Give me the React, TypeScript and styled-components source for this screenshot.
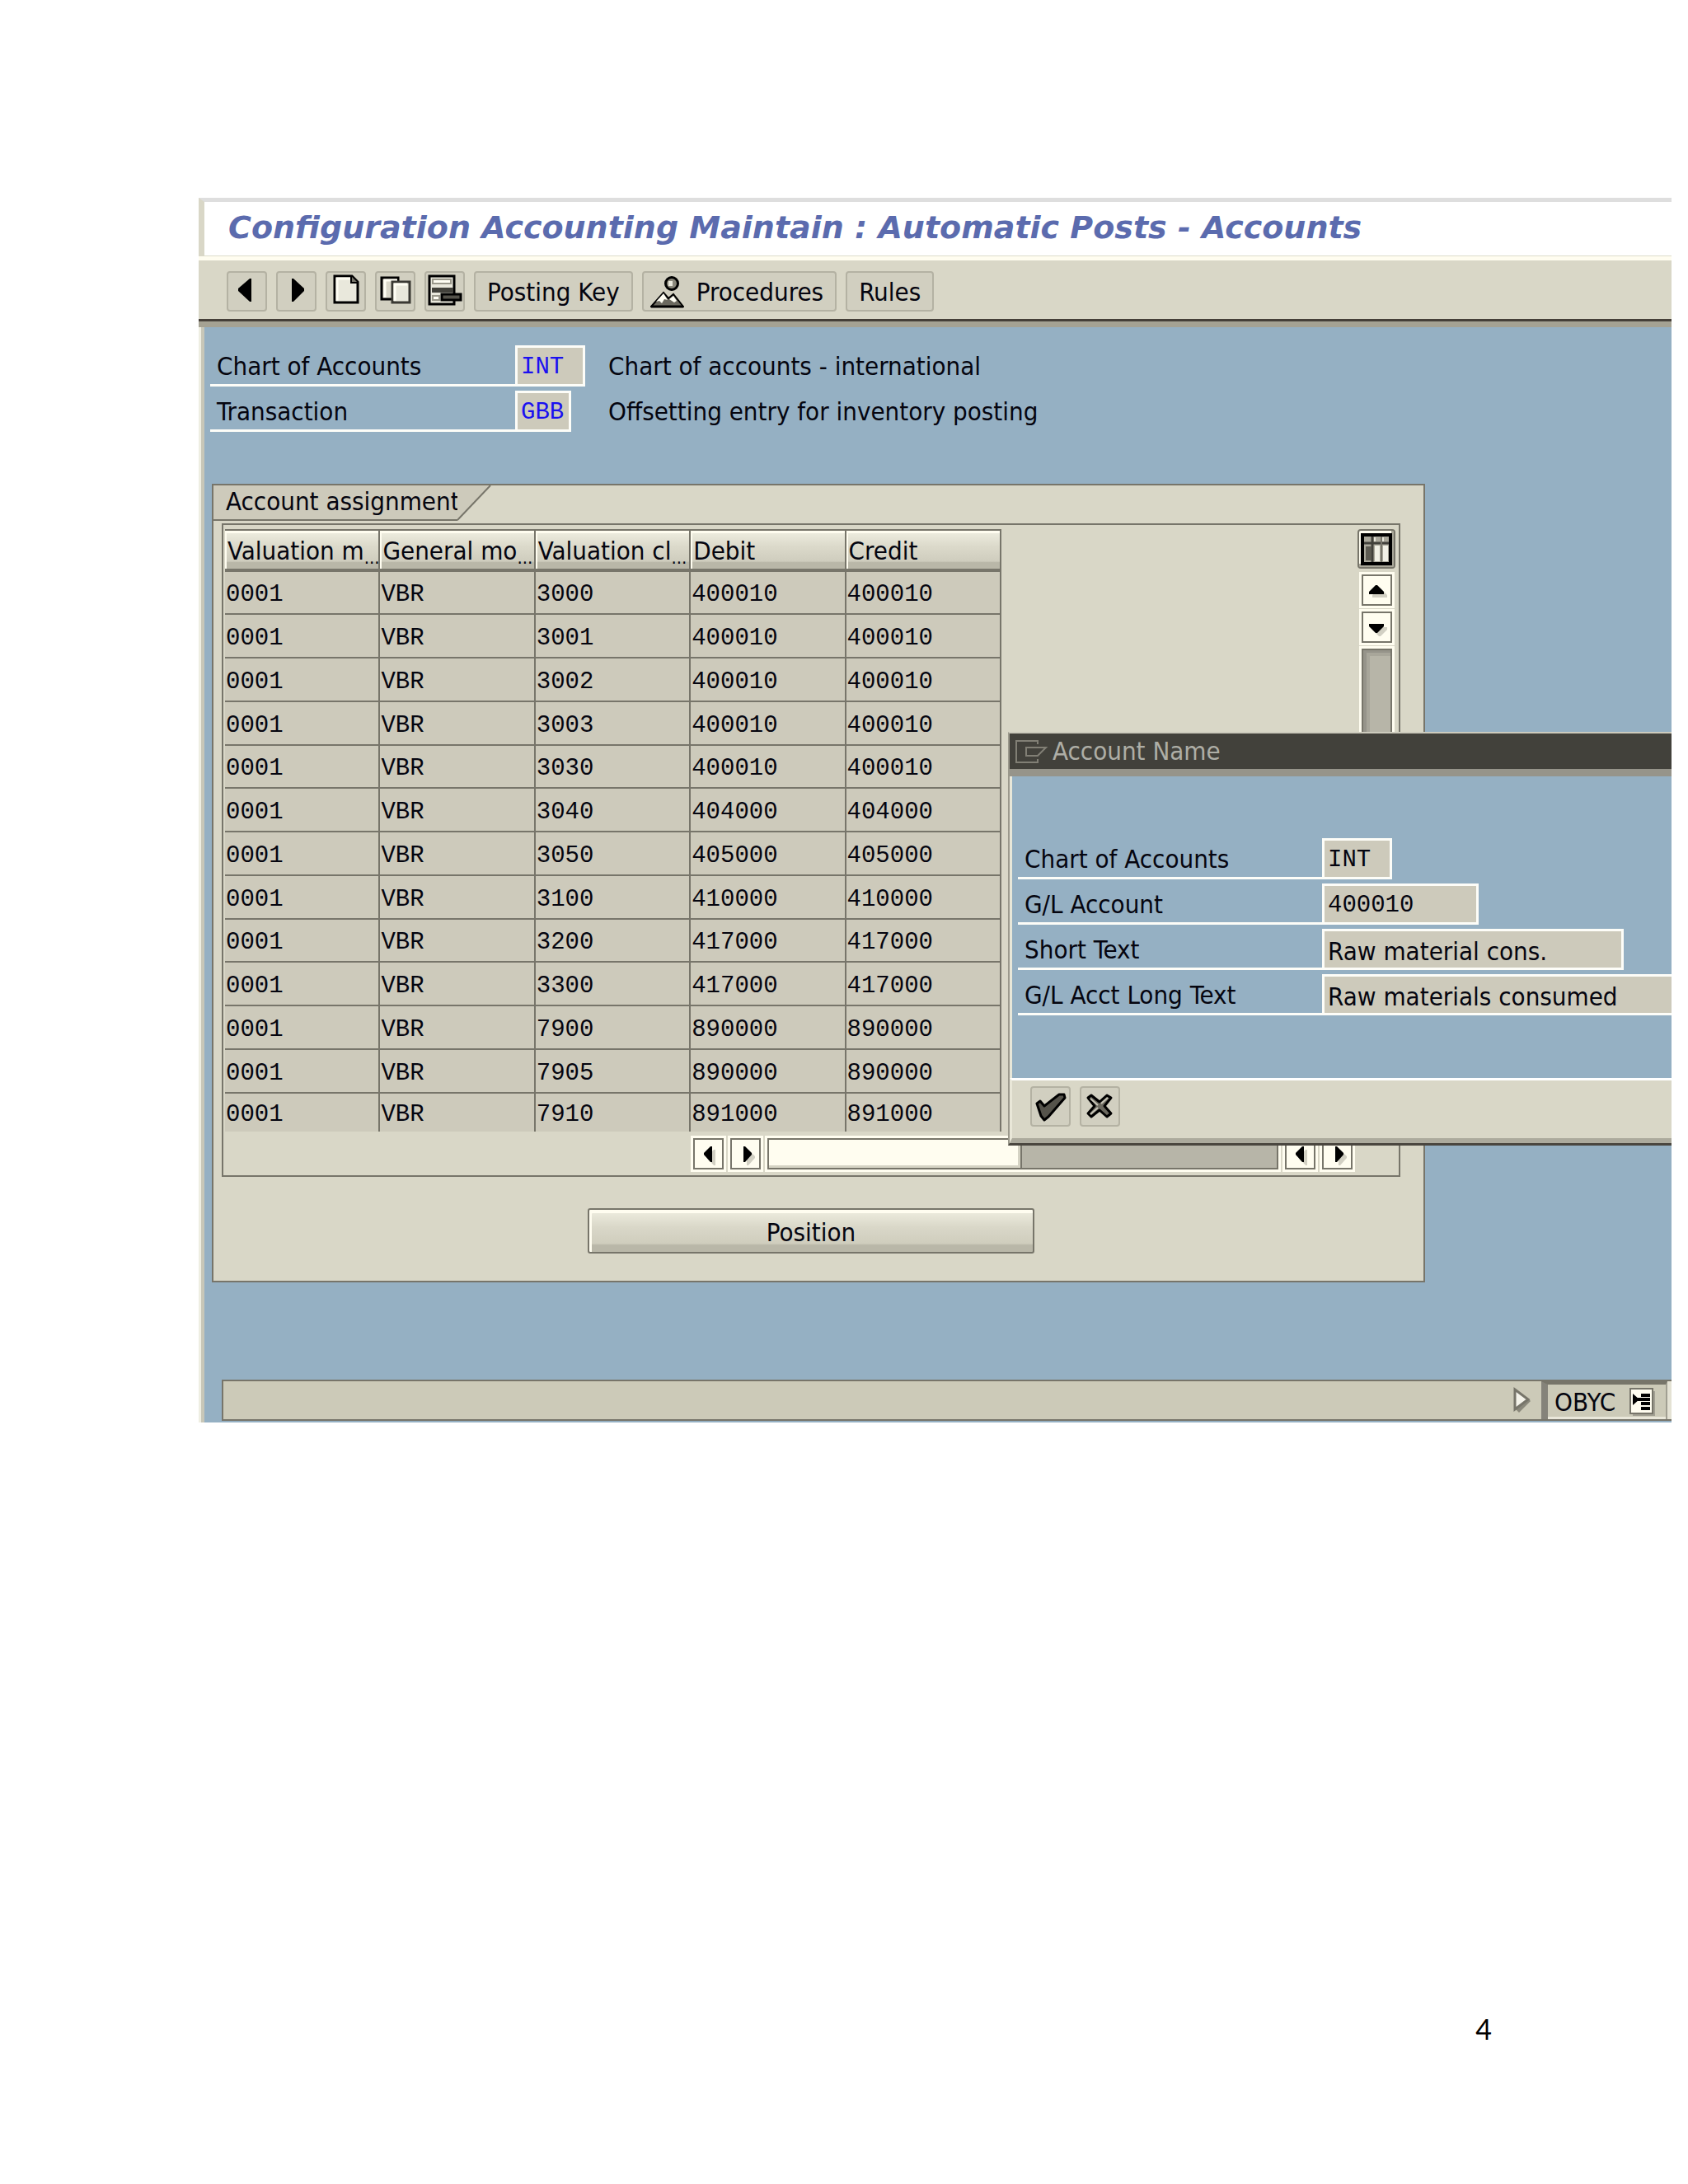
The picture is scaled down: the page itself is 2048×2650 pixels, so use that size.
import React from "react";
import styled, { createGlobalStyle, css } from "styled-components";

const color = {
  blue: "#95b0c3",
  panel: "#d9d7c7",
  cell: "#cdcabb",
  button: "#d1cfc0",
  line: "#77756a",
  soft: "#b4b2a3",
  cream: "#fffdf0",
  white: "#fdfdf8",
  ink: "#05050f",
  title: "#5b6bae",
  dark: "#42413b",
};

const sans = `"DejaVu Sans Condensed", "Noto Sans", sans-serif`;
const mono = `"Liberation Mono", monospace`;

const GlobalStyle = createGlobalStyle`
  * { box-sizing: border-box; }
  body { margin: 0; background: #fff; color: ${color.ink}; }
  body, button, input { font-family: ${sans}; font-size: 31px; }
  svg { display: block; flex: none; }
`;

const Page = styled.div`
  min-height: 100vh;
  padding: 240px 20px 0 241px;
`;

const Window = styled.main`
  position: relative;
  overflow: hidden;
`;

const TitleBar = styled.header`
  height: 71px;
  display: flex;
  align-items: center;
  padding-left: 29px;
  border-top: 5px solid #dedede;
  border-left: 7px solid ${color.panel};
  box-shadow: inset 0 -1px #dddccb;
`;

const Title = styled.h1`
  margin: 0;
  font: italic bold 38px/48px "DejaVu Sans", sans-serif;
  color: ${color.title};
  white-space: nowrap;
  padding-bottom: 4px;
`;

const Toolbar = styled.nav`
  display: flex;
  gap: 11px;
  height: 86px;
  padding: 13px 0 0 34px;
  background: ${color.panel};
  border-top: 5px solid ${color.cream};
  border-bottom: 7px solid #a5a293;
  box-shadow: inset 0 -3px #453f38;
`;

const ToolButton = styled.button<{ $wide?: boolean }>`
  display: flex;
  align-items: center;
  gap: 15px;
  height: 49px;
  width: ${(p) => (p.$wide ? "auto" : "49px")};
  padding: ${(p) => (p.$wide ? "0 14px" : "0")};
  border: 2px solid ${color.soft};
  border-radius: 4px;
  background: ${color.button};
  color: ${color.ink};
  white-space: nowrap;
`;

const IconLabel = styled(ToolButton)`
  padding: 0 14px 0 8px;
`;

const Workspace = styled.div`
  padding: 22px 0 2px 7px;
  background: ${color.blue};
  border-left: 3px solid #eeeee2;
  box-shadow: inset 4px 0 #c8c7b8;
`;

const Form = styled.form<{ $left: number }>`
  display: grid;
  gap: 5px;
  padding-left: ${(p) => p.$left}px;
`;

const FormRow = styled.div`
  display: flex;
  height: 50px;
`;

const FieldLabel = styled.label<{ $width: number }>`
  flex: none;
  width: ${(p) => p.$width}px;
  padding: 4px 0 0 8px;
  line-height: 43px;
  white-space: nowrap;
  border-bottom: 3px solid ${color.white};
`;

const Field = styled.input<{ $width?: number; $mono?: boolean; $open?: boolean; $blue?: boolean }>`
  height: 50px;
  min-width: 0;
  ${(p) => (p.$width ? css`width: ${p.$width}px;` : css`flex: 1;`)}
  padding: 3px 0 0 4px;
  border: 3px solid ${color.white};
  ${(p) => p.$open && css`border-right: 0;`}
  border-radius: 0;
  outline: 0;
  background: ${color.cell};
  color: ${(p) => (p.$blue ? "#1a10f0" : color.ink)};
  ${(p) => p.$mono && css`font-family: ${mono}; font-size: 29px;`}
`;

const Description = styled.output<{ $gap: number }>`
  padding: 3px 0 0 ${(p) => p.$gap}px;
  line-height: 45px;
  white-space: nowrap;
`;

const Panel = styled.section`
  margin: 63px 299px 0 6px;
  border: 2px solid ${color.line};
  background: ${color.panel};
`;

const Tab = styled.div`
  display: flex;
  height: 43px;
  margin-bottom: 3px;
`;

const TabLabel = styled.h2`
  margin: 0;
  width: 296px;
  padding-left: 15px;
  font: 31px/39px ${sans};
  white-space: nowrap;
  background: ${color.cell};
  border-bottom: 2px solid ${color.line};
`;

const PanelBody = styled.div`
  display: flex;
  flex-direction: column;
  align-items: center;
  gap: 38px;
  padding: 0 28px 33px 10px;
`;

const GridBox = styled.div`
  align-self: stretch;
  border: 2px solid ${color.line};
  padding: 5px 4px 4px 2px;
`;

const GridTop = styled.div`
  display: flex;
  justify-content: space-between;
`;

const Table = styled.table`
  table-layout: fixed;
  width: 942px;
  border-spacing: 0;
  border-collapse: separate;
`;

const HeadCell = styled.th`
  height: 52px;
  padding: 2px 0 0 3px;
  text-align: left;
  font-weight: normal;
  line-height: 40px;
  white-space: nowrap;
  overflow: hidden;
  border: solid ${color.line};
  border-width: 2px 2px 4px 0;
  background: linear-gradient(#efeee1, #dcdacb 40%, #cfcdbe 80%, #b9b7a8 84%);
  box-shadow: inset 2px 3px ${color.cream};
`;

const Dots = styled.span`
  font-size: 22px;
  line-height: 20px;
  vertical-align: -5px;
`;

const Row = styled.tr`
  height: 53px;
  &:nth-child(4n + 1) { height: 52px; }
  &:last-child { height: 46px; }
  &:last-child td { border-bottom: 0; }
`;

const Cell = styled.td`
  padding: 6px 0 0 1px;
  font: 29px/36px ${mono};
  background: ${color.cell};
  border: solid ${color.line};
  border-width: 0 2px 2px 0;
`;

const SideBar = styled.div`
  display: flex;
  flex-direction: column;
  align-items: center;
  gap: 7px;
  width: 46px;
`;

const ColumnsButton = styled.button`
  display: grid;
  place-items: center;
  width: 46px;
  height: 48px;
  padding: 0;
  border: 2px solid ${color.line};
  border-radius: 4px;
  background: ${color.cream};
  box-shadow: inset -3px -4px #a9a799;
`;

const ScrollButton = styled.button`
  display: grid;
  place-items: center;
  flex: none;
  width: 37px;
  height: 38px;
  padding: 0;
  border: 2px solid ${color.line};
  background: ${color.cream};
  box-shadow: 0 0 0 3px ${color.cream};
`;

const VerticalTrack = styled.div`
  flex: 1;
  width: 37px;
  border: 2px solid ${color.line};
  background: #b7b5a8;
  box-shadow: 0 0 0 3px ${color.cream}, inset 4px 3px #96948a, inset 8px 7px #a8a69a;
`;

const BottomScroll = styled.div`
  display: flex;
  gap: 8px;
  margin: 8px 52px 3px 568px;
`;

const HorizontalTrack = styled.div`
  flex: 1;
  border: 2px solid ${color.line};
  background: #b7b5a8;
  box-shadow: 0 0 0 3px ${color.cream};
`;

const Thumb = styled.div`
  width: 307px;
  height: 100%;
  background: ${color.cream};
  border-right: 2px solid ${color.line};
  box-shadow: inset -3px -3px #d5d3c4;
`;

const PositionButton = styled.button`
  width: 542px;
  height: 55px;
  padding: 2px 0 0;
  border: 2px solid ${color.line};
  border-radius: 3px;
  color: ${color.ink};
  background: linear-gradient(#efeee0, #dad8c9 40%, #cfcdbd 80%, #b9b7a8 84%);
  box-shadow: inset 3px 4px ${color.cream};
`;

const StatusBar = styled.footer`
  display: flex;
  height: 50px;
  margin: 118px 0 0 18px;
  border: solid ${color.line};
  border-width: 2px 0 2px 2px;
  background: #cccab8;
`;

const StatusMessage = styled.div`
  flex: 1;
  display: flex;
  align-items: center;
  justify-content: flex-end;
  padding-right: 12px;
`;

const StatusCode = styled.button`
  display: flex;
  align-items: center;
  gap: 17px;
  width: 153px;
  padding: 0 0 0 8px;
  border: solid ${color.line};
  border-width: 4px 2px 0 8px;
  border-right-color: #a19f92;
  border-left-color: #85837a;
  background: #cccab8;
  color: ${color.ink};
  box-shadow: inset 0 -3px #e9e7da;
`;

const StatusEnd = styled.div`
  width: 5px;
  background: #e4e2d4;
`;

const Dialog = styled.section`
  position: absolute;
  top: 648px;
  left: 982px;
  right: 0;
  border-top: 2px solid #cdcbbd;
  border-left: 2px solid #9b998c;
  border-bottom: 3px solid #4a463f;
  background: ${color.panel};
`;

const DialogTitle = styled.h2`
  display: flex;
  align-items: center;
  gap: 5px;
  margin: 0;
  height: 52px;
  padding-left: 6px;
  font: 31px/43px ${sans};
  color: #aeaea6;
  background: ${color.dark};
  border-bottom: 9px solid #96948a;
`;

const DialogBody = styled.div`
  padding: 75px 0 76px;
  background: ${color.blue};
  border-left: 3px solid #e9e7d8;
`;

const DialogFooter = styled.div`
  display: flex;
  gap: 11px;
  padding: 7px 0 14px 22px;
  border-top: 3px solid #fff;
  border-left: 3px solid #e9e7d8;
  border-bottom: 6px solid #acaa9d;
`;

const PageNumber = styled.div`
  margin-top: 716px;
  padding-right: 218px;
  text-align: right;
  font: 34px/40px Lato, sans-serif;
  color: #000;
`;

const LeftIcon = () => (
  <svg width="45" height="45" viewBox="2 2 45 45" aria-hidden="true">
    <path d="M30 9v28h-2L14 24v-3L28 9z" />
  </svg>
);

const RightIcon = () => (
  <svg width="45" height="45" viewBox="2 2 45 45" aria-hidden="true">
    <path d="M19 9v28h2l13-13v-3L21 9z" />
  </svg>
);

const PageIcon = () => (
  <svg width="45" height="45" viewBox="2 2 45 45" aria-hidden="true">
    <path d="M11 6h21l7 7v25H11z" fill="#e9e8dc" stroke="#000" strokeWidth="3" />
    <path d="M14 36V9h17" fill="none" stroke="#fffef4" strokeWidth="3" />
    <path d="M31 6v8h8" fill="#77756a" stroke="#000" strokeWidth="2" />
  </svg>
);

const CopyIcon = () => (
  <svg width="45" height="45" viewBox="2 2 45 45" aria-hidden="true">
    <path d="M8 8h20v26H8z" fill="#dad8ca" stroke="#000" strokeWidth="3" />
    <path d="M12 32V11h15" fill="none" stroke="#fffef4" strokeWidth="3" />
    <path d="M21 13h21v25H21z" fill="#e9e8dc" stroke="#3a3933" strokeWidth="3" />
    <path d="M24 36V16h15" fill="none" stroke="#fffef4" strokeWidth="3" />
  </svg>
);

const DeleteRowIcon = () => (
  <svg width="45" height="45" viewBox="2 2 45 45" aria-hidden="true">
    <path d="M6 6h30v34H6z" fill="#e9e8dc" stroke="#000" strokeWidth="3" />
    <path d="M10 10h22v5H10zM10 30h8v5h-8z" fill="#fffef4" stroke="#9a988b" strokeWidth="2" />
    <path d="M9 20h26v6H9z" fill="#42413b" />
    <path d="M21 28h23v7H21z" fill="#55534b" stroke="#000" strokeWidth="3" />
  </svg>
);

const ProceduresIcon = () => (
  <svg width="41" height="40" viewBox="0 0 41 40" aria-hidden="true">
    <circle cx="26" cy="10" r="7.500" fill="#8a887b" stroke="#000" strokeWidth="3" />
    <path d="M22 7h5v6h-5z" fill="#e9e8dc" />
    <path d="M1 38 16 21l6 7 6-5 12 15z" fill="#6b695f" stroke="#000" strokeWidth="2" />
    <path d="M7 32l9-10 5 8-4-1-3 5-3-3zM23 29l5-4 4 6-3 2-3-2z" fill="#fffef4" />
    <path d="M1 38h39" stroke="#000" strokeWidth="3" />
  </svg>
);

const ColumnsIcon = () => (
  <svg width="38" height="39" viewBox="0 0 38 39" aria-hidden="true">
    <path d="M2 2h34v35H2z" fill="#aaa89b" stroke="#000" strokeWidth="4" />
    <path d="M4 12h30" stroke="#42413b" strokeWidth="3" />
    <path d="M14 4v31" stroke="#42413b" strokeWidth="3" />
    <path d="M25 4v31" stroke="#77756a" strokeWidth="2" />
    <path d="M6 16h7v17H6z" fill="#5d5b52" />
    <path d="M17 15h6v19h-6zM27 15h6v19h-6z" fill="#f2f1e6" />
    <path d="M17 5v5M27 5v5" stroke="#e9e8dc" strokeWidth="2" />
  </svg>
);

const arrowPaths = {
  up: "M7 21v-3l8-8h2l8 8v3z",
  down: "M7 12v3l8 8h2l8-8v-3z",
  left: "M20 7h-2l-8 8v2l8 9h2z",
  right: "M13 7h2l8 8v2l-8 9h-2z",
};

const ArrowIcon = ({ to }: { to: keyof typeof arrowPaths }) => (
  <svg width="32" height="33" viewBox="0 0 32 33" aria-hidden="true">
    <path d={arrowPaths[to]} fill="#d2d0c3" transform="translate(4 4)" />
    <path d={arrowPaths[to]} />
  </svg>
);

const DialogIcon = () => (
  <svg width="41" height="30" viewBox="0 0 41 30" aria-hidden="true">
    <path
      d="M28 6V2H2v26h26v-4M28 20H14V10h24z"
      fill="none"
      stroke="#817f75"
      strokeWidth="2"
    />
  </svg>
);

const CheckIcon = () => (
  <svg width="45" height="45" viewBox="2 2 45 45" aria-hidden="true">
    <path d="M8 21l4-3 5 6 18-14 6 0 1 4L22 37l-5 4-4-5z" fill="#55534b" stroke="#000" strokeWidth="3" strokeLinejoin="round" />
  </svg>
);

const CancelIcon = () => (
  <svg width="45" height="45" viewBox="2 2 45 45" aria-hidden="true">
    <path d="M10 14l4-3 10 8 9-8 5 3-8 10 8 9-5 4-9-8-10 8-4-4 8-9z" fill="#6b695f" stroke="#000" strokeWidth="3" strokeLinejoin="round" />
    <path d="M13 15l9 8M22 26l-9 8M34 14l-8 7" stroke="#c8c6b8" strokeWidth="2" />
  </svg>
);

const StatusArrowIcon = () => (
  <svg width="22" height="32" viewBox="0 0 22 32" aria-hidden="true">
    <path d="M3 27l4 4L21 17l-3-3z" fill="#8a887b" />
    <path d="M2 3l16 12L2 27z" fill="#f4f3ea" stroke="#77756a" strokeWidth="3" />
  </svg>
);

const MenuIcon = () => (
  <svg width="31" height="34" viewBox="0 0 31 34" aria-hidden="true">
    <path d="M4 4h27v30H4z" fill="#a19f92" />
    <path d="M1 1h27v30H1z" fill={color.cream} stroke="#77756a" strokeWidth="2" />
    <path d="M4 7v14l8-7z" />
    <path d="M14 9h11M10 14h15M14 19h11M14 25h11" stroke="#000" strokeWidth="4" />
  </svg>
);

const columns = [
  { name: "Valuation m", cut: true },
  { name: "General mo", cut: true },
  { name: "Valuation cl", cut: true },
  { name: "Debit", cut: false },
  { name: "Credit", cut: false },
];

const accounts: [string, string][] = [
  ["3000", "400010"],
  ["3001", "400010"],
  ["3002", "400010"],
  ["3003", "400010"],
  ["3030", "400010"],
  ["3040", "404000"],
  ["3050", "405000"],
  ["3100", "410000"],
  ["3200", "417000"],
  ["3300", "417000"],
  ["7900", "890000"],
  ["7905", "890000"],
  ["7910", "891000"],
];

export default function App() {
  return (
    <Page>
      <GlobalStyle />
      <Window>
        <TitleBar>
          <Title>Configuration Accounting Maintain : Automatic Posts - Accounts</Title>
        </TitleBar>
        <Toolbar>
          <ToolButton aria-label="Previous"><LeftIcon /></ToolButton>
          <ToolButton aria-label="Next"><RightIcon /></ToolButton>
          <ToolButton aria-label="New"><PageIcon /></ToolButton>
          <ToolButton aria-label="Copy"><CopyIcon /></ToolButton>
          <ToolButton aria-label="Delete row"><DeleteRowIcon /></ToolButton>
          <ToolButton $wide>Posting Key</ToolButton>
          <IconLabel $wide><ProceduresIcon />Procedures</IconLabel>
          <ToolButton $wide>Rules</ToolButton>
        </Toolbar>

        <Workspace>
          <Form $left={4}>
            <FormRow>
              <FieldLabel htmlFor="chart" $width={370}>Chart of Accounts</FieldLabel>
              <Field id="chart" readOnly $mono $blue $width={85} defaultValue="INT" />
              <Description htmlFor="chart" $gap={28}>Chart of accounts - international</Description>
            </FormRow>
            <FormRow>
              <FieldLabel htmlFor="transaction" $width={370}>Transaction</FieldLabel>
              <Field id="transaction" readOnly $mono $blue $width={68} defaultValue="GBB" />
              <Description htmlFor="transaction" $gap={45}>Offsetting entry for inventory posting</Description>
            </FormRow>
          </Form>

          <Panel>
            <Tab>
              <TabLabel>Account assignment</TabLabel>
              <svg width="41" height="43" viewBox="0 0 41 43" aria-hidden="true">
                <path d="M0 0h40L0 43z" fill={color.cell} />
                <path d="M0 42 40 0" stroke={color.line} strokeWidth="2" />
              </svg>
            </Tab>
            <PanelBody>
              <GridBox>
                <GridTop>
                  <Table>
                    <thead>
                      <tr>
                        {columns.map((c) => (
                          <HeadCell key={c.name} scope="col">
                            {c.name}
                            {c.cut && <Dots>...</Dots>}
                          </HeadCell>
                        ))}
                      </tr>
                    </thead>
                    <tbody>
                      {accounts.map(([valuation, account]) => (
                        <Row key={valuation}>
                          <Cell>0001</Cell>
                          <Cell>VBR</Cell>
                          <Cell>{valuation}</Cell>
                          <Cell>{account}</Cell>
                          <Cell>{account}</Cell>
                        </Row>
                      ))}
                    </tbody>
                  </Table>
                  <SideBar>
                    <ColumnsButton aria-label="Table settings"><ColumnsIcon /></ColumnsButton>
                    <ScrollButton aria-label="Scroll up"><ArrowIcon to="up" /></ScrollButton>
                    <ScrollButton aria-label="Scroll down"><ArrowIcon to="down" /></ScrollButton>
                    <VerticalTrack />
                  </SideBar>
                </GridTop>
                <BottomScroll>
                  <ScrollButton aria-label="First column"><ArrowIcon to="left" /></ScrollButton>
                  <ScrollButton aria-label="Next column"><ArrowIcon to="right" /></ScrollButton>
                  <HorizontalTrack><Thumb /></HorizontalTrack>
                  <ScrollButton aria-label="Scroll left"><ArrowIcon to="left" /></ScrollButton>
                  <ScrollButton aria-label="Scroll right"><ArrowIcon to="right" /></ScrollButton>
                </BottomScroll>
              </GridBox>
              <PositionButton>Position</PositionButton>
            </PanelBody>
          </Panel>

          <StatusBar>
            <StatusMessage><StatusArrowIcon /></StatusMessage>
            <StatusCode>OBYC<MenuIcon /></StatusCode>
            <StatusEnd />
          </StatusBar>
        </Workspace>

        <Dialog role="dialog" aria-labelledby="dialog-title">
          <DialogTitle id="dialog-title"><DialogIcon />Account Name</DialogTitle>
          <DialogBody>
            <Form $left={7}>
              <FormRow>
                <FieldLabel htmlFor="d-chart" $width={369}>Chart of Accounts</FieldLabel>
                <Field id="d-chart" readOnly $mono $width={85} defaultValue="INT" />
              </FormRow>
              <FormRow>
                <FieldLabel htmlFor="d-account" $width={369}>G/L Account</FieldLabel>
                <Field id="d-account" readOnly $mono $width={190} defaultValue="400010" />
              </FormRow>
              <FormRow>
                <FieldLabel htmlFor="d-short" $width={369}>Short Text</FieldLabel>
                <Field id="d-short" readOnly $width={366} defaultValue="Raw material cons." />
              </FormRow>
              <FormRow>
                <FieldLabel htmlFor="d-long" $width={369}>G/L Acct Long Text</FieldLabel>
                <Field id="d-long" readOnly $open defaultValue="Raw materials consumed" />
              </FormRow>
            </Form>
          </DialogBody>
          <DialogFooter>
            <ToolButton aria-label="Continue"><CheckIcon /></ToolButton>
            <ToolButton aria-label="Cancel"><CancelIcon /></ToolButton>
          </DialogFooter>
        </Dialog>
      </Window>
      <PageNumber>4</PageNumber>
    </Page>
  );
}
